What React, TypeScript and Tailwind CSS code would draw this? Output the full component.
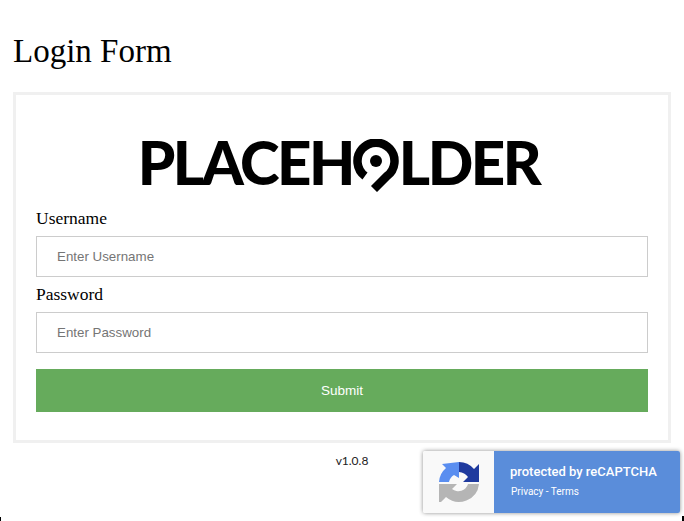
const slab = 'font-["Liberation_Serif",serif]';

function PinO() {
  return (
    <svg width="46" height="54" viewBox="0 0 46 54" className="shrink-0">
      <path d="M12 37 A18.5 18.5 0 1 1 34 37 L21 50" fill="none" stroke="#000" strokeWidth="8.5" />
      <circle cx="23" cy="22" r="6" fill="#000" />
    </svg>
  );
}

function RecaptchaIcon() {
  return (
    <svg width="42" height="42" viewBox="0 0 42 42">
      <path d="M1 21 A20 20 0 0 1 8 7 L4 3 L21 1 L21 17 L16 14 A11 11 0 0 0 11 21 Z" fill="#5a8ef0" />
      <path d="M21 1 A20 20 0 0 1 36 8 L41 3 L41 21 L25 21 L30 16 A12 12 0 0 0 21 11 Z" fill="#1f3a9e" />
      <path d="M1 23 L19 23 L14 28 A10 10 0 0 0 30 23 L41 23 A20 20 0 0 1 8 36 L3 41 L1 41 Z" fill="#b5b5b5" />
    </svg>
  );
}

export default function App() {
  return (
    <div className="relative h-[521px] w-[684px] overflow-hidden bg-white">
      <div className="px-[13px] pt-[32px]">
        <h1 className={`${slab} text-[33px] leading-[38px] text-black`}>Login Form</h1>
        <div className="mt-[22px] h-[351px] w-[658px] border-[3px] border-[#f0f0f0] px-[20px] pt-[44px]">
          <div className="flex h-[53px] items-start justify-center pr-[7px] font-['Lato',sans-serif] text-[60px] leading-[46px] font-black tracking-[-2.5px] text-black">
            <span>PLACEH</span>
            <PinO />
            <span>LDER</span>
          </div>
          <label className={`${slab} mt-[14px] block text-[17.5px] leading-[24px] text-black`}>Username</label>
          <input
            placeholder="Enter Username"
            className="mt-[6px] block h-[41px] w-full border border-[#cccccc] px-[20px] font-['Liberation_Sans',sans-serif] text-[13.33px] placeholder:text-[#757575]"
          />
          <label className={`${slab} mt-[5px] block text-[17.5px] leading-[24px] text-black`}>Password</label>
          <input
            placeholder="Enter Password"
            className="mt-[6px] block h-[41px] w-full border border-[#cccccc] px-[20px] font-['Liberation_Sans',sans-serif] text-[13.33px] placeholder:text-[#757575]"
          />
          <button className="mt-[16px] block h-[43px] w-full bg-[#66ab5c] pt-[1px] font-['Liberation_Sans',sans-serif] text-[13.5px] text-white">
            Submit
          </button>
        </div>
        <p className="mt-[10px] w-[678px] text-center font-['Lato',sans-serif] text-[12px] leading-[16px] text-[#222222]">v1.0.8</p>
      </div>
      <div className="absolute top-[451px] left-[423px] flex h-[62px] w-[257px] overflow-hidden rounded-[2px] shadow-[0_0_4px_rgba(0,0,0,0.45)]">
        <div className="flex w-[71px] items-center justify-center bg-[#f9f9f9]">
          <RecaptchaIcon />
        </div>
        <div className="flex-1 bg-[#5a8dda] pt-[11px] pl-[16px] font-['Roboto',sans-serif] text-white">
          <div className="text-[13px] leading-[20px] font-medium">protected by reCAPTCHA</div>
          <div className="mt-[2px] pl-[1px] text-[10px] leading-[16px]">Privacy - Terms</div>
        </div>
      </div>
      <div className="absolute bottom-0 left-0 h-[4px] w-[1px] bg-black" />
      <div className="absolute right-0 bottom-0 h-[5px] w-[2px] bg-black" />
    </div>
  );
}
